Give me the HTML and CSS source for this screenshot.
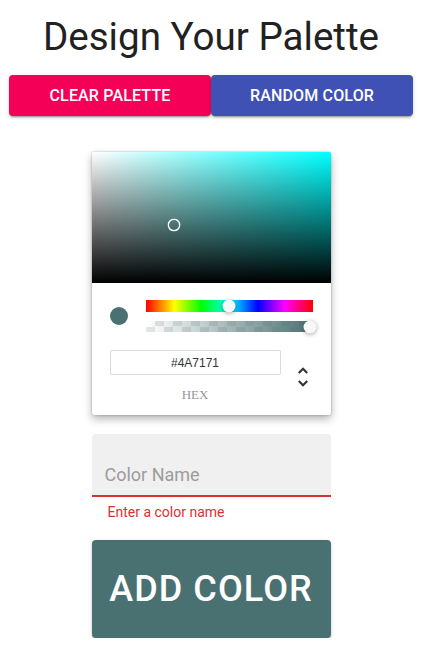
FILE: index.html
```html
<!DOCTYPE html>
<html lang="en">
<head>
  <meta charset="UTF-8">
  <meta name="viewport" content="width=device-width, initial-scale=1">
  <title>Design Your Palette</title>
  <link rel="stylesheet" href="styles.css">
</head>
<body>
  <main class="drawer">
    <h1 class="title">Design Your Palette</h1>

    <div class="actions">
      <button class="btn btn-clear">Clear Palette</button>
      <button class="btn btn-random">Random Color</button>
    </div>

    <!-- color picker -->
    <section class="picker">
      <div class="saturation">
        <span class="sat-pointer"></span>
      </div>
      <div class="picker-body">
        <div class="controls">
          <div class="swatch-col">
            <span class="swatch"></span>
          </div>
          <div class="sliders">
            <div class="hue">
              <span class="knob knob-hue"></span>
            </div>
            <div class="alpha">
              <div class="alpha-fill"></div>
              <span class="knob knob-alpha"></span>
            </div>
          </div>
        </div>
        <div class="fields">
          <div class="field">
            <input class="hex-input" type="text" value="#4A7171">
            <span class="hex-label">hex</span>
          </div>
          <div class="toggle">
            <svg viewBox="0 0 24 24" width="26" height="26">
              <path fill="#333" d="M12,18.17L8.83,15L7.42,16.41L12,21L16.59,16.41L15.17,15M12,5.83L15.17,9L16.58,7.59L12,3L7.41,7.59L8.83,9L12,5.83Z"/>
            </svg>
          </div>
        </div>
      </div>
    </section>

    <div class="text-field">
      <label class="tf-label" for="colorName">Color Name</label>
      <input class="tf-input" id="colorName" type="text">
    </div>
    <p class="helper">Enter a color name</p>

    <button class="add-btn">Add Color</button>
  </main>
</body>
</html>
```

FILE: styles.css
```css
:root {
  --current: #4a7171;
  --pink: #f50057;
  --indigo: #3f51b5;
  --error: #dc2f2f;
}

body {
  margin: 0;
  background: #fff;
  font-family: Roboto, "Noto Sans", sans-serif;
}

.drawer {
  display: flex;
  flex-direction: column;
  align-items: center;
  padding-left: 1px;
}

.title {
  font-size: 38.6px;
  font-weight: 400;
  line-height: 48px;
  color: #212121;
  margin: 13px 0 14px;
}

.actions {
  display: flex;
  width: 404px;
}

.btn {
  flex: 1;
  height: 41px;
  border: none;
  border-radius: 4px;
  color: #fff;
  font-family: Roboto, sans-serif;
  font-size: 16px;
  font-weight: 500;
  letter-spacing: 0.01em;
  text-transform: uppercase;
  cursor: pointer;
  box-shadow: 0 3px 1px -2px rgba(0,0,0,0.2), 0 2px 2px 0 rgba(0,0,0,0.14), 0 1px 5px 0 rgba(0,0,0,0.12);
}

.btn-clear {
  background: var(--pink);
}

.btn-random {
  background: var(--indigo);
}

/* picker */
.picker {
  width: 239px;
  margin-top: 36px;
  background: #fff;
  border-radius: 2px;
  box-shadow: 0 0 2px rgba(0,0,0,0.3), 0 4px 8px rgba(0,0,0,0.3);
  font-family: "Liberation Serif", serif;
}

.saturation {
  position: relative;
  height: 131px;
  border-radius: 2px 2px 0 0;
  background:
    linear-gradient(to top, #000, rgba(0,0,0,0)),
    linear-gradient(to right, #fff, rgba(255,255,255,0)),
    #00ffff;
}

.sat-pointer {
  position: absolute;
  left: 82px;
  top: 73px;
  width: 13px;
  height: 13px;
  border-radius: 50%;
  box-shadow: inset 0 0 0 1.5px #fff;
  transform: translate(-50%, -50%);
}

.picker-body {
  padding: 17px 18px 13px;
}

.controls {
  display: flex;
}

.swatch-col {
  width: 36px;
}

.swatch {
  display: block;
  width: 18px;
  height: 18px;
  margin-top: 7px;
  border-radius: 50%;
  background: var(--current);
}

.sliders {
  flex: 1;
}

.hue {
  position: relative;
  height: 12px;
  margin-bottom: 9px;
  background: linear-gradient(to right, #f00 0%, #ff0 17%, #0f0 33%, #0ff 50%, #00f 67%, #f0f 83%, #f00 100%);
}

.alpha {
  position: relative;
  height: 11px;
  background: conic-gradient(#e6e6e6 25%, #fff 0 50%, #e6e6e6 0 75%, #fff 0) 0 0 / 18px 11px;
}

.alpha-fill {
  height: 100%;
  background: linear-gradient(to right, rgba(74,113,113,0), rgb(74,113,113));
}

.knob {
  position: absolute;
  top: 50%;
  width: 13px;
  height: 13px;
  border-radius: 50%;
  background: #f8f8f8;
  box-shadow: 0 1px 4px rgba(0,0,0,0.37);
  transform: translate(-50%, -50%);
}

.knob-hue {
  left: 50%;
}

.knob-alpha {
  left: calc(100% - 3px);
}

.fields {
  display: flex;
  margin-top: 18px;
}

.field {
  flex: 1;
  display: flex;
  flex-direction: column;
}

.hex-input {
  box-sizing: border-box;
  width: 100%;
  height: 25px;
  margin: 0;
  padding: 0;
  border: none;
  border-radius: 2px;
  box-shadow: inset 0 0 0 1px #dadada;
  text-align: center;
  font-family: "Liberation Sans", Arial, sans-serif;
  font-size: 12px;
  color: #333;
  outline: none;
}

.hex-label {
  margin-top: 13px;
  line-height: 14px;
  font-size: 13px;
  color: #969696;
  text-align: center;
  text-transform: uppercase;
}

.toggle {
  width: 32px;
  display: flex;
  justify-content: flex-end;
}

.toggle svg {
  margin-top: 14px;
  margin-right: -3px;
}

/* color name field */
.text-field {
  box-sizing: border-box;
  width: 239px;
  height: 63px;
  margin-top: 19px;
  padding: 31px 13px 0;
  background: #f0f0f0;
  border-radius: 4px 4px 0 0;
  border-bottom: 2px solid var(--error);
  display: flex;
  flex-direction: column;
}

.tf-label {
  font-size: 18px;
  line-height: 20px;
  color: #9c9c9c;
}

.tf-input {
  display: none;
}

.helper {
  width: 239px;
  box-sizing: border-box;
  margin: 4px 0 0;
  padding-left: 16px;
  font-size: 14px;
  line-height: 23px;
  color: var(--error);
}

.add-btn {
  width: 239px;
  height: 98px;
  margin-top: 16px;
  border: none;
  border-radius: 4px;
  background: var(--current);
  color: #fff;
  font-family: Roboto, sans-serif;
  font-size: 36px;
  font-weight: 500;
  letter-spacing: 0.03em;
  text-transform: uppercase;
  cursor: pointer;
  box-shadow: 0 3px 1px -2px rgba(0,0,0,0.2), 0 2px 2px 0 rgba(0,0,0,0.14), 0 1px 5px 0 rgba(0,0,0,0.12);
}
```
